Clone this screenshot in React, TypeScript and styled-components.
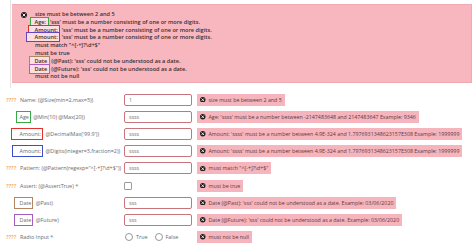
import React from 'react';
import styled, { createGlobalStyle } from 'styled-components';

const Global = createGlobalStyle`
  html, body { margin: 0; padding: 0; background: #fff; }
  body {
    font-family: "Open Sans", "Noto Sans", sans-serif;
    width: 474px;
    height: 244px;
    overflow: hidden;
  }
`;

const AlertWrap = styled.div`
  margin-left: 10px;
  border-left: 1px solid #e4e4e4;
  padding: 4px 2px 5px 1px;
`;

const Alert = styled.div`
  width: 460px;
  height: 79px;
  box-sizing: border-box;
  background: #f8b7bf;
  border: 1px solid #f1a9b2;
  border-left: none;
  display: flex;
  align-items: flex-start;
  padding: 6px 0 0 9px;
`;

const IconCol = styled.div`
  width: 14px;
  display: flex;
  padding-top: 1px;
`;

const Lines = styled.div`
  display: flex;
  flex-direction: column;
`;

const Line = styled.div`
  height: 7.8px;
  line-height: 7.8px;
  font-size: 5.6px;
  font-weight: 600;
  color: #3a2e30;
  white-space: nowrap;
`;

const Tag = styled.span<{ $c: string; $l: number }>`
  border: 1.5px solid ${(p) => p.$c};
  padding: 0 1.5px 0 ${(p) => p.$l}px;
  margin-left: -${(p) => p.$l + 1.5}px;
  background: #fbe0e3;
`;

const Form = styled.div`
  margin-top: 3px;
  display: grid;
  grid-template-columns: 14px 104px 68px auto;
  grid-auto-rows: 17.2px;
  padding-left: 6px;
  align-items: center;
`;

const Q = styled.span`
  font-size: 5.6px;
  font-weight: 600;
  color: #f3a24e;
`;

const Label = styled.span`
  font-size: 5.4px;
  color: #6a6a6a;
  white-space: nowrap;
`;

const LTag = styled.span<{ $c: string; $l: number }>`
  border: 1.5px solid ${(p) => p.$c};
  padding: 1px 1px 1px ${(p) => p.$l}px;
  margin-left: -${(p) => p.$l + 1.5}px;
  margin-right: 1px;
`;

const Input = styled.div`
  height: 12px;
  box-sizing: border-box;
  border: 1px solid #c8747c;
  border-radius: 2px;
  background: #fff;
  font-size: 5.3px;
  color: #777;
  line-height: 10px;
  padding-left: 4px;
`;

const Check = styled.div`
  width: 8px;
  height: 8px;
  box-sizing: border-box;
  border: 1px solid #9a9a9a;
  border-radius: 1px;
`;

const Radios = styled.div`
  display: flex;
  align-items: center;
  font-size: 5.4px;
  color: #666;
  padding-left: 1px;
`;

const Radio = styled.span`
  width: 8px;
  height: 8px;
  box-sizing: border-box;
  border: 1px solid #9a9a9a;
  border-radius: 50%;
  margin-right: 3px;
`;

const RText = styled.span`
  margin-right: 7px;
`;

const Badge = styled.div`
  justify-self: start;
  margin-left: 5px;
  height: 12px;
  display: inline-flex;
  align-items: center;
  gap: 3px;
  padding: 0 3px;
  background: #f6b5bd;
  font-size: 5.3px;
  color: #5a3b3f;
  white-space: nowrap;
`;

const XIcon = ({ size = 6 }: { size?: number }) => (
  <svg width={size} height={size} viewBox="0 0 16 16" style={{ display: 'block', flex: 'none' }}>
    <circle cx="8" cy="8" r="8" fill="#1d1d1d" />
    <path d="M5 5 L11 11 M11 5 L5 11" stroke="#fff" strokeWidth="2.4" strokeLinecap="round" />
  </svg>
);

type Row = {
  q?: boolean;
  label: React.ReactNode;
  control: React.ReactNode;
  err: string;
};

const rows: Row[] = [
  { q: true, label: 'Name: (@Size(min=2,max=5))', control: <Input>1</Input>, err: 'size must be between 2 and 5' },
  {
    label: (
      <>
        <LTag $c="#3aa845" $l={2.5}>Age</LTag> @Min(10) @Max(20))
      </>
    ),
    control: <Input>ssss</Input>,
    err: "Age: 'ssss' must be a number between -2147483648 and 2147483647 Example: 9346",
  },
  {
    label: (
      <>
        <LTag $c="#e0312f" $l={7.5}>Amount:</LTag> @DecimalMax('99.9'))
      </>
    ),
    control: <Input>ssss</Input>,
    err: "Amount: 'ssss' must be a number between 4.9E-324 and 1.7976931348623157E308 Example: 1999999",
  },
  {
    label: (
      <>
        <LTag $c="#3c4fc4" $l={6.5}>Amount:</LTag> @Digits(integer=3,fraction=2))
      </>
    ),
    control: <Input>ssss</Input>,
    err: "Amount: 'ssss' must be a number between 4.9E-324 and 1.7976931348623157E308 Example: 1999999",
  },
  { q: true, label: 'Pattern: (@Pattern(regexp="^[-+]?\\d+$"))', control: <Input>ssss</Input>, err: 'must match "^[-+]?\\d+$"' },
  { q: true, label: 'Assert: (@AssertTrue) *', control: <Check />, err: 'must be true' },
  {
    label: (
      <>
        <LTag $c="#b4865f" $l={4.5}>Date</LTag> @Past)
      </>
    ),
    control: <Input>sss</Input>,
    err: "Date (@Past): 'sss' could not be understood as a date. Example: 03/06/2020",
  },
  {
    label: (
      <>
        <LTag $c="#a85bc0" $l={4.5}>Date</LTag> @Future)
      </>
    ),
    control: <Input>sss</Input>,
    err: "Date (@Future): 'sss' could not be understood as a date. Example: 03/06/2020",
  },
  {
    q: true,
    label: 'Radio Input *',
    control: (
      <Radios>
        <Radio />
        <RText>True</RText>
        <Radio />
        <RText>False</RText>
      </Radios>
    ),
    err: 'must not be null',
  },
];

export default function App() {
  return (
    <>
      <Global />
      <AlertWrap>
        <Alert>
          <IconCol>
            <XIcon size={6} />
          </IconCol>
          <Lines>
            <Line>size must be between 2 and 5</Line>
            <Line>
              <Tag $c="#3aa845" $l={3.5}>Age:</Tag> 'sss' must be a number consisting of one or more digits.
            </Line>
            <Line>
              <Tag $c="#e0312f" $l={5.5}>Amount:</Tag> 'sss' must be a number consisting of one or more digits.
            </Line>
            <Line>
              <Tag $c="#6346c8" $l={7.5}>Amount:</Tag> 'sss' must be a number consisting of one or more digits.
            </Line>
            <Line>must match "^[-+]?\d+$"</Line>
            <Line>must be true</Line>
            <Line>
              <Tag $c="#b4865f" $l={4.5}>Date</Tag> (@Past): 'sss' could not be understood as a date.
            </Line>
            <Line>
              <Tag $c="#b05cc8" $l={4.5}>Date</Tag> (@Future): 'sss' could not be understood as a date.
            </Line>
            <Line>must not be null</Line>
          </Lines>
        </Alert>
      </AlertWrap>
      <Form>
        {rows.map((r, i) => (
          <React.Fragment key={i}>
            <Q>{r.q ? '????' : ''}</Q>
            <Label>{r.label}</Label>
            {r.control}
            <Badge>
              <XIcon size={5.5} />
              {r.err}
            </Badge>
          </React.Fragment>
        ))}
      </Form>
    </>
  );
}
